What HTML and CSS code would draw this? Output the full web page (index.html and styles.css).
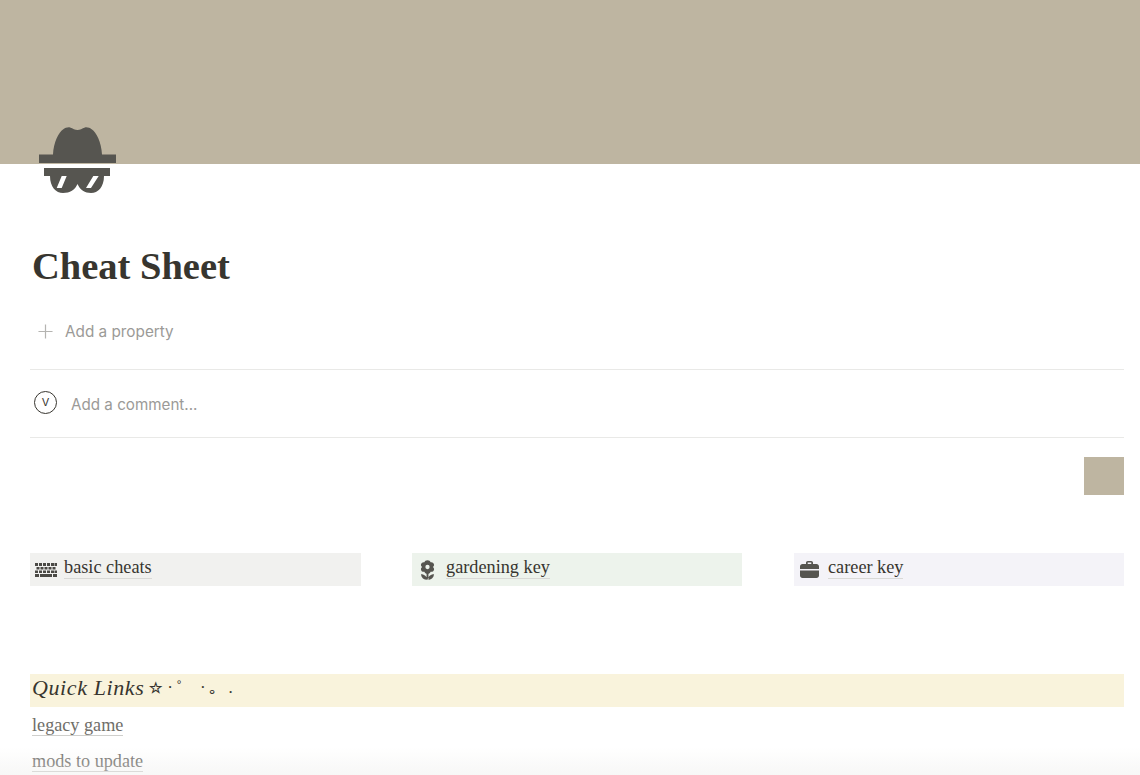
FILE: index.html
```html
<!DOCTYPE html>
<html lang="en">
<head>
<meta charset="utf-8">
<title>Cheat Sheet</title>
<link rel="stylesheet" href="styles.css">
</head>
<body>
<div class="cover"></div>
<main class="page">
  <svg class="page-icon" viewBox="0 0 77 67" aria-hidden="true">
    <path fill="#565550" d="M0 27.500H14C14.500 15 20 5 24 2.500C26 1 29 0 31 .5C34 1.500 36 3 38.500 3C41 3 43 1.500 46 .5C48 0 51 1 53 2.500C57 5 62.500 15 63 27.500H77V36H0Z"/>
    <path fill="#565550" fill-rule="evenodd" d="M5 41H71V49H65C65 60 59 66 52 66C46 66 41 63 38.500 57C36 63 31 66 24 66C17 66 11 60 11 49H5ZM22.700 49L17.700 61H22.700L27.700 49ZM54.300 49L47 61H52L59.700 49Z"/>
  </svg>
  <h1 class="title">Cheat Sheet</h1>
  <div class="property">
    <svg class="plus" viewBox="0 0 16 16" aria-hidden="true"><path d="M8 0.500V15.500M0.500 8H15.500"/></svg>
    <span>Add a property</span>
  </div>
  <div class="comment">
    <span class="avatar">V</span>
    <span class="comment-text">Add a comment...</span>
  </div>
  <div class="swatch-row"><div class="swatch"></div></div>
  <div class="columns">
    <div class="callout callout-gray">
      <svg class="callout-icon" viewBox="0 0 22 14" aria-hidden="true">
        <path fill="#4a4945" d="M0 0h3v3H0zM4 0h3v3H4zM8 0h3v3H8zM12 0h3v3h-3zM16 0h3v3h-3zM19.500 0H22v3h-2.500zM1.500 4h3v2.500h-3zM5.500 4h3v2.500h-3zM9.500 4h3v2.500h-3zM13.500 4h3v2.500h-3zM17.500 4h3v2.500h-3zM0 7.500h3V10H0zM4 7.500h3V10H4zM8 7.500h3V10H8zM12 7.500h3V10h-3zM16 7.500h3V10h-3zM19.500 7.500H22V10h-2.500zM0 11h4v3H0zM5 11h12v3H5zM18 11h4v3h-4z"/>
      </svg>
      <a class="callout-link">basic cheats</a>
    </div>
    <div class="callout callout-green">
      <svg class="callout-icon flower" viewBox="0 0 16 21" aria-hidden="true">
        <path fill="#565550" fill-rule="evenodd" d="M8 0C9.800 0 11 1 11.300 2.200C13.300 1.800 15 3.200 15 5C15 6 14.500 6.800 13.800 7.300C14.500 7.800 15 8.600 15 9.600C15 11.400 13.300 12.800 11.300 12.400C11 13.600 9.800 14.600 8 14.600C6.200 14.600 5 13.600 4.700 12.400C2.700 12.800 1 11.400 1 9.600C1 8.600 1.500 7.800 2.200 7.300C1.500 6.800 1 6 1 5C1 3.200 2.700 1.800 4.700 2.200C5 1 6.200 0 8 0ZM8 5A2.300 2.300 0 1 0 8 9.600A2.300 2.300 0 1 0 8 5Z"/>
        <path fill="#565550" d="M7 13H9V21H7ZM1 15C4 15 7 16.500 8 21C4 21 1.500 19 1 15ZM15 15C12 15 9 16.500 8 21C12 21 14.500 19 15 15Z"/>
      </svg>
      <a class="callout-link">gardening key</a>
    </div>
    <div class="callout callout-lilac">
      <svg class="callout-icon case" viewBox="0 0 19 17" aria-hidden="true">
        <path fill="#565550" d="M6 3V1.800C6 .8 6.800 0 7.800 0H11.200C12.200 0 13 .8 13 1.800V3H11.300V1.600H7.700V3Z"/>
        <path fill="#565550" d="M2.500 3H16.500C17.900 3 19 4.100 19 5.500V8H0V5.500C0 4.100 1.100 3 2.500 3ZM0 9.500H19V14.500C19 15.900 17.900 17 16.500 17H2.500C1.100 17 0 15.900 0 14.500Z"/>
      </svg>
      <a class="callout-link">career key</a>
    </div>
  </div>
  <div class="banner">Quick Links <span class="banner-marks"><span class="star">☆</span>·˚ &nbsp;·｡ .</span></div>
  <p class="plain-link"><a>legacy game</a></p>
  <p class="plain-link"><a>mods to update</a></p>
</main>
<div class="fade"></div>
</body>
</html>
```

FILE: styles.css
```css
html, body {
  margin: 0;
  height: 775px;
  overflow: hidden;
  background: #fff;
}
body {
  position: relative;
  font-family: "Liberation Serif", serif;
  color: #37352f;
}
.cover {
  height: 164px;
  background: #beb5a1;
}
.page {
  padding: 0 16px 0 30px;
  display: flex;
  flex-direction: column;
}
.page-icon {
  width: 77px;
  height: 67px;
  margin: -37px 0 0 9px;
  display: block;
  position: relative;
}
.title {
  margin: 48px 0 0 2px;
  font-size: 38.500px;
  line-height: 48px;
  font-weight: 700;
  color: #37352f;
}
.property {
  margin-top: 19px;
  height: 44px;
  display: flex;
  align-items: center;
  gap: 12px;
  padding-left: 8px;
  box-sizing: border-box;
  font-family: Inter, "Noto Sans", sans-serif;
  font-size: 15.300px;
  color: #9b9a97;
}
.plus {
  width: 15px;
  height: 15px;
  fill: none;
  stroke: #b5b4b1;
  stroke-width: 1.300;
}
.comment {
  margin-top: 16px;
  height: 69px;
  border-top: 1px solid #e9e9e7;
  border-bottom: 1px solid #e9e9e7;
  display: flex;
  align-items: center;
  gap: 14px;
  padding-left: 4px;
  box-sizing: border-box;
  font-family: Inter, "Noto Sans", sans-serif;
  font-size: 15.200px;
  color: #9b9a97;
}
.comment-text {
  padding-top: 2px;
}
.avatar {
  width: 21px;
  height: 21px;
  border: 1px solid #37352f;
  border-radius: 50%;
  display: flex;
  align-items: center;
  justify-content: center;
  font-size: 11px;
  color: #37352f;
  margin-top: -3px;
}
.swatch-row {
  display: flex;
  justify-content: flex-end;
  margin-top: 19px;
}
.swatch {
  width: 40px;
  height: 38px;
  background: #beb5a1;
}
.columns {
  display: grid;
  grid-template-columns: 331px 330px 330px;
  column-gap: 51px;
  margin-top: 58px;
}
.callout {
  height: 33px;
  display: flex;
  align-items: center;
  box-sizing: border-box;
  font-size: 18.250px;
}
.callout-gray { background: #f1f1ef; padding-left: 5px; gap: 7px; }
.callout-green { background: #edf3ec; padding-left: 8px; gap: 11px; }
.callout-lilac { background: #f4f3f8; padding-left: 6px; gap: 9px; margin: 0 -1px 0 1px; }
.callout-icon {
  width: 22px;
  height: 14px;
  flex: none;
}
.callout-icon.flower { width: 15px; height: 20px; }
.callout-icon.case { width: 19px; height: 17px; }
.callout-link {
  color: #37352f;
  border-bottom: 1px solid #d9d9d6;
  line-height: 22px;
  margin-top: -4px;
}
.banner {
  margin-top: 88px;
  height: 33px;
  padding: 0 0 5px 2px;
  box-sizing: border-box;
  background: #f9f3dc;
  display: flex;
  align-items: center;
  gap: 3px;
  font-size: 22px;
  font-style: italic;
  letter-spacing: 0.600px;
  color: #37352f;
}
.banner-marks {
  font-style: normal;
  font-size: 17px;
  letter-spacing: 3.200px;
  white-space: pre;
  margin-left: 2px;
}
.star {
  font-size: 15px;
  font-weight: 700;
  letter-spacing: 5px;
}
.plain-link {
  margin: 6px 0 0 2px;
  height: 30px;
  font-size: 18.200px;
  line-height: 24px;
}
.plain-link a {
  color: #6f6e69;
  border-bottom: 1px solid #cfcfcc;
}
.fade {
  position: absolute;
  left: 0;
  right: 0;
  bottom: 0;
  height: 28px;
  background: linear-gradient(rgba(255,255,255,0), rgba(238,238,236,0.45));
}
```
